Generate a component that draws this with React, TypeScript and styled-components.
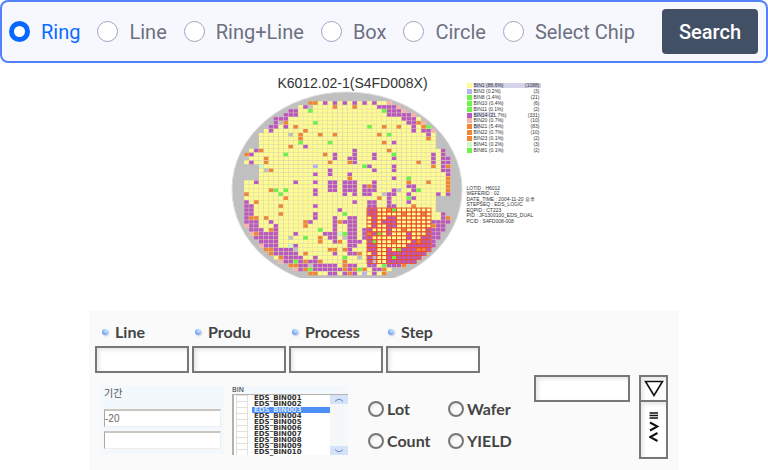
import React, { useState } from "react";
import styled, { createGlobalStyle } from "styled-components";

const GlobalStyle = createGlobalStyle`
  *, *::before, *::after { box-sizing: border-box; }
  body { margin: 0; background: #fff; font-family: Inter, "Liberation Sans", sans-serif; }
  button, input { font: inherit; margin: 0; padding: 0; }
`;

/* ---------- search bar ---------- */

const SearchBar = styled.form`
  display: flex;
  align-items: center;
  gap: 17px;
  height: 63px;
  padding: 0 8px 0 7px;
  border: 2px solid #5580fb;
  border-radius: 8px;
  background: #f7f8fe;
`;

const ModeLabel = styled.label<{ $active: boolean }>`
  display: flex;
  align-items: center;
  gap: 11px;
  font-family: Roboto, sans-serif;
  font-size: 20px;
  line-height: 24px;
  white-space: nowrap;
  color: ${(p) => (p.$active ? "#0b6bff" : "#6c7080")};
`;

const ModeRadio = styled.input`
  appearance: none;
  width: 21px;
  height: 21px;
  border: 1px solid #9da4c2;
  border-radius: 50%;
  background: #fff;
  &:checked { border: 5px solid #0668ff; }
`;

const SearchButton = styled.button`
  width: 96px;
  height: 45px;
  margin-left: auto;
  border: 0;
  border-radius: 4px;
  background: #415065;
  color: #fff;
  font-family: Roboto, sans-serif;
  font-size: 20px;
  font-weight: 500;
`;

/* ---------- wafer ---------- */

const WaferSection = styled.section`
  display: flex;
  justify-content: center;
  gap: 4px;
  padding: 13px 0 0 3px;
`;

const WaferFigure = styled.figure`
  width: 232px;
  margin: 0;
  svg { display: block; }
`;

const WaferTitle = styled.figcaption`
  padding-left: 12px;
  text-align: center;
  white-space: nowrap;
  font-family: "Liberation Sans", sans-serif;
  font-size: 14px;
  line-height: 15px;
  color: #333;
`;

const WaferSide = styled.div`
  width: 74px;
  padding-top: 7px;
  font-family: "Liberation Sans", sans-serif;
  font-size: 5px;
  color: #333;
`;

const Legend = styled.ul`
  display: grid;
  grid-template-rows: repeat(12, 1fr);
  height: 70px;
  margin: 0 0 33px;
  padding: 0;
  list-style: none;
`;

const LegendRow = styled.li<{ $color: string; $share: number }>`
  display: grid;
  grid-template-columns: 5px 1fr auto;
  align-items: center;
  gap: 2px;
  line-height: 5px;
  padding-right: 1px;
  background: linear-gradient(#d3d3ea, #d3d3ea) 7px 0 / ${(p) => p.$share}% 5px no-repeat;
  &::before { content: ""; height: 5px; background: ${(p) => p.$color}; }
`;

const LotInfo = styled.div`
  display: grid;
  height: 38px;
  line-height: 5px;
  white-space: nowrap;
`;

const COLORS: Record<string, string> = {
  Y: "#fffb93", P: "#bb58bf", O: "#f08535", G: "#67f646",
  K: "#f5b3ad", B: "#b4b4f5", L: "#cdf8c8", S: "#c0c0c0",
};

/* Each row: first-last column, then the coloured runs on the yellow field. */
const ROWS = [
  "13-29 O13-14 P16 P18 P20 P22 P24 P26 K29",
  "11-31 P12 S13 O18 O22 P27-30 K31",
  "9-32 P9-10 G13 G28 P29-31 K32",
  "8-34 P8-10 P29-33 K34",
  "6-35 P6-8 P32-34",
  "6-36 P6 S7 O8 G14 P33-34 O35 K36",
  "5-37 P5-6 P8 O10 G25 O28 O31 P34 O36 G37",
  "4-38 P5 O12 P34 P36-37 K38",
  "3-38 S9 O11 O15 O18 O27 G29 P37",
  "3-38 O11 O37",
  "3-38 G11 G17 O28 P30",
  "3-38 O9 P12",
  "1-40 P2 O3 P22 O29 P40",
  "0-40 O0 P1 G8 O16 P18 P22 P26 G30 P38 P40",
  "1-41 O4 P18 P21-22 P26 P30 P38 P40-41",
  "0-41 P1 O4 O17 O21 P22 O35 P38 P40-41",
  "3-41 L3 B14 G24 P25 P30 O38 P40 O41",
  "3-41 S4 O5 P17 P26 P30 P40-41",
  "3-41 P14 P17 P21 P41",
  "3-41 O21 P30 G33 O41",
  "0-41 P2 P10 P14 P17-18 P20-22 P26 O33 O37 O41",
  "0-41 P17-18 P20-22 P24 O25 P26 P33-34 O41",
  "0-41 O5 G6 G8 P14 P17-18 P20-22 P24-26 P30 S31 P34 G35 O41",
  "0-41 O0 G7 P14 P20 P22 P24-25 S28 P29-30 P33 P39 P41",
  "0-38 O8 O27 P29 G33 P34",
  "0-38 P0 O2 P22 P25-26 P29 P33",
  "0-38 P0-1 O7 P14 P25-26 P29-30 O34",
  "0-38 P0-1 P19 P25-26 O29 G30",
  "0-40 P0-1 O7 P14 G20 P25-26 O32 O36 P40",
  "0-41 P0 O1-2 O4 P14 P18 P21-22 P26 P29-30 P40 O41",
  "0-41 P0-2 P5 O12 P13 P18 O19 P20-22 P26 P28-30 P38-41",
  "0-40 K0 P1-2 P6 O12 P18 P21-22 P26 P29-30 O38 P39-40",
  "1-40 P1-3 O5 P6 G15 P18 P21-22 P24-25 P29 O32 P37-40",
  "1-39 K1 O2 P3-6 P10 P16-18 L19 G20 P21-22 P24 O25 P26 G27 P29 P33 P37-39",
  "2-39 P2-6 S9 G12 O15 P17-18 S20 P21-22 P24-25 P33 P36-39",
  "3-38 P3-6 O15 P18 O19 P21-23 P25 G26 O30 P34 O35 P36-38",
  "3-38 K3 P4-6 L9 P10 P21-22 P25-26 P33-38",
  "4-37 O4-5 P6-9 S10 O17-18 O20 P21 P25-26 P29 G31 P32-34 O35-36 P37",
  "5-36 O5 P6-10 O12 P18 P21-22 O23 P26 P29-36",
  "6-35 O7 P8-11 P14 G20 S23 P25 B26 P29 G30 P31-35",
  "7-34 K7 P8-9 G10 P11 O12 P13-14 O15 O20 P25 S26 P29-34",
  "9-32 O9-10 P11-12 S13 P14-18 O20 P21-22 P25-26 G28 P29-31 O32",
  "10-29 K10 P11 O12 G13 P14-18 P19 O20 P21 O22 G23 O24 P26-27 O28",
  "13-28 O13-14 P17-18 P20 O21 P22 B24 P26 O28",
];

type Cell = { row: number; col: number; kind: string };

const CELLS: Cell[] = ROWS.flatMap((text, row) => {
  const [extent, ...runs] = text.split(" ");
  const [first, last] = extent.split("-").map(Number);
  const kinds: string[] = [];
  for (let c = first; c <= last; c++) kinds[c] = "Y";
  runs.forEach((run) => {
    const [a, b = a] = run.slice(1).split("-").map(Number);
    for (let c = a; c <= b; c++) kinds[c] = run[0];
  });
  const cells: Cell[] = [];
  for (let c = first; c <= last; c++) cells.push({ row, col: c, kind: kinds[c] });
  return cells;
});

const CW = 4.92;
const CH = 3.965;
const isSelected = (c: Cell) => c.row >= 27 && c.row <= 40 && c.col >= 25 && c.col <= 37;

function WaferMap() {
  return (
    <svg width="232" height="188" viewBox="0 0 232 188" role="img" aria-label="Wafer bin map">
      <ellipse cx="116" cy="98.3" rx="115" ry="97.3" fill="#c0c0c0" stroke="#dcdcdc" strokeWidth="1" />
      <path d="M60 187.5H172" stroke="#fff" strokeWidth="1" />
      <g transform="translate(13 10)">
        {CELLS.map((c) => (
          <g key={`${c.row}-${c.col}`}>
            <rect x={c.col * CW} y={c.row * CH} width={CW} height={CH} fill="#d8d4ae" shapeRendering="crispEdges" />
            <rect x={c.col * CW + 0.25} y={c.row * CH + 0.25} width={CW - 0.5} height={CH - 0.5} fill={COLORS[c.kind]} />
          </g>
        ))}
        {CELLS.filter(isSelected).map((c) => (
          <rect key={`s${c.row}-${c.col}`} x={c.col * CW} y={c.row * CH} width={CW} height={CH}
            fill="none" stroke="#ea4a28" strokeWidth="0.8" />
        ))}
      </g>
    </svg>
  );
}

const BINS: [string, string, string, string, number][] = [
  ["BIN1", "(86.6%)", "(1088)", "#fffb93", 91],
  ["BIN3", "(0.2%)", "(3)", "#b4b4f5", 0],
  ["BIN8", "(1.4%)", "(21)", "#67f646", 0],
  ["BIN10", "(0.4%)", "(6)", "#67f646", 0],
  ["BIN11", "(0.1%)", "(2)", "#67f646", 0],
  ["BIN14", "(21.7%)", "(331)", "#bb58bf", 28],
  ["BIN20", "(0.7%)", "(10)", "#f5b3ad", 0],
  ["BIN21", "(5.4%)", "(83)", "#f08535", 8],
  ["BIN22", "(0.7%)", "(10)", "#f08535", 0],
  ["BIN23", "(0.1%)", "(2)", "#f08535", 0],
  ["BIN41", "(0.2%)", "(3)", "#cdf8c8", 0],
  ["BIN81", "(0.1%)", "(2)", "#67f646", 0],
];

const LOT_LINES = [
  "LOTID : H6012",
  "WEFERID : 02",
  "DATE_TIME : 2004-11-20 오후",
  "STEPSEQ : EDS_LOGIC",
  "EQPID : CT223",
  "PID : JF1300100_EDS_DUAL",
  "PCID : S4FD008-008",
];

/* ---------- filter panel ---------- */

const Panel = styled.section`
  display: flex;
  justify-content: space-between;
  align-items: flex-end;
  width: 590px;
  max-width: 100%;
  min-height: 159px;
  margin: 32px auto 0;
  padding: 8px 11px 11px 6px;
  background: #fafafa;
  color: #444;
  font-family: Lato, sans-serif;
  font-size: 16px;
  font-weight: 700;
`;

const Filters = styled.div`
  width: 385px;
  padding-bottom: 4px;
`;

const FieldRow = styled.div`
  display: grid;
  grid-template-columns: repeat(4, 1fr);
  gap: 3px;
`;

const FieldLabel = styled.label`
  display: grid;
  gap: 2px;
  line-height: 24px;
`;

const FieldCaption = styled.span<{ $indent: number }>`
  display: flex;
  align-items: center;
  gap: 7px;
  padding-left: ${(p) => p.$indent}px;
  &::before {
    content: "";
    width: 6px;
    height: 6px;
    border-radius: 50%;
    background: radial-gradient(circle at 65% 30%, #d5e6ff, #619bf5 75%);
    box-shadow: 1px 1px 2px #ccc;
  }
`;

const TextBox = styled.input`
  width: 100%;
  height: 27px;
  border: 2px solid #777;
  border-radius: 0;
  background: #fff;
  box-shadow: inset 2px 2px 4px #e4e4e4;
`;

const LowerRow = styled.div`
  display: grid;
  grid-template-columns: 124px 116px 1fr;
  gap: 8px;
  align-items: start;
  margin-top: 13px;
  padding-left: 5px;
`;

const Period = styled.fieldset`
  display: grid;
  gap: 3px;
  min-width: 0;
  height: 68px;
  margin: 0;
  padding: 0 3px 5px 4px;
  border: 0;
  background: #f2f8fc;
  font-family: "Liberation Sans", "Noto Sans CJK KR", sans-serif;
  font-size: 10px;
  font-weight: 400;
  color: #555;
`;

const PeriodCaption = styled.div`
  height: 20px;
  line-height: 15px;
`;

const PeriodInput = styled.input`
  width: 100%;
  height: 18px;
  border: 1px solid #eee;
  border-top: 2px solid #c9c7bd;
  border-left: 1px solid #aaa89e;
  background: #fff;
  color: #666;
`;

const BinPicker = styled.div`
  height: 69px;
  background: #f2f8fc;
  font-family: "DejaVu Sans", sans-serif;
  font-size: 7px;
  font-weight: 700;
  line-height: 6px;
  color: #333;
`;

const BinCaption = styled.div`
  height: 8px;
  padding-top: 1px;
  font-weight: 400;
`;

const BinBody = styled.div`
  display: grid;
  grid-template-columns: 1fr 18px;
  height: 61px;
  border-left: 2px solid #b5b2a8;
  border-top: 1px solid #b5b2a8;
  background: #fff;
`;

const BinOption = styled.label<{ $on: boolean }>`
  display: grid;
  grid-template-columns: 12px 1fr;
  gap: 4px;
  align-items: center;
  height: 6px;
  padding-left: 2px;
  span {
    height: 6px;
    padding-left: 2px;
    background: ${(p) => (p.$on ? "#4d90f5" : "transparent")};
    color: ${(p) => (p.$on ? "#cfe2ff" : "inherit")};
  }
`;

const BinCheck = styled.input`
  appearance: none;
  width: 12px;
  height: 6px;
  border: 1px solid #e2e0d8;
  border-bottom: 0;
  background: #fff;
`;

const ScrollTrack = styled.div`
  display: flex;
  flex-direction: column;
  justify-content: space-between;
  background: #f6f7f9;
`;

const ScrollButton = styled.button`
  display: grid;
  place-items: center;
  height: 9px;
  border: 0;
  background: #d5e2fb;
`;

const UnitGrid = styled.div`
  display: grid;
  grid-template-columns: 80px 1fr;
  row-gap: 8px;
  padding: 11px 0 0 12px;
`;

const UnitLabel = styled.label`
  display: flex;
  align-items: center;
  gap: 3px;
  line-height: 24px;
`;

const UnitRadio = styled.input`
  appearance: none;
  flex: none;
  width: 16px;
  height: 16px;
  border: 2px solid #777;
  border-radius: 50%;
  background: #fafafa;
  box-shadow: inset 1px 1px 2px #ddd;
  &:checked { background: #777; }
`;

const Actions = styled.div`
  display: grid;
  grid-template-columns: 96px 29px;
  gap: 9px;
  align-items: start;
`;

const ActionStack = styled.div`
  display: grid;
  grid-template-rows: 27px 57px;
`;

const StackButton = styled.button`
  display: grid;
  place-items: center;
  border: 2px solid #777;
  background: #fff;
  box-shadow: inset 2px 2px 4px #e4e4e4;
  & + & { border-top: 0; padding-bottom: 6px; }
`;

const MODES = ["Ring", "Line", "Ring+Line", "Box", "Circle", "Select Chip"];
const FIELDS: [string, number][] = [["Line", 7], ["Produ", 3], ["Process", 3], ["Step", 2]];
const BIN_NAMES = Array.from({ length: 10 }, (_, i) => `EDS_BIN${String(i + 1).padStart(3, "0")}`);
const UNITS = ["Lot", "Wafer", "Count", "YIELD"];

export default function App() {
  const [mode, setMode] = useState("Ring");
  return (
    <>
      <GlobalStyle />
      <SearchBar onSubmit={(e) => e.preventDefault()}>
        {MODES.map((m) => (
          <ModeLabel key={m} $active={m === mode}>
            <ModeRadio type="radio" name="mode" checked={m === mode} onChange={() => setMode(m)} />
            {m}
          </ModeLabel>
        ))}
        <SearchButton type="submit">Search</SearchButton>
      </SearchBar>

      <WaferSection>
        <WaferFigure>
          <WaferTitle>K6012.02-1(S4FD008X)</WaferTitle>
          <WaferMap />
        </WaferFigure>
        <WaferSide>
          <Legend>
            {BINS.map(([name, pct, count, color, share]) => (
              <LegendRow key={name} $color={color} $share={share}>
                <span>{name} {pct}</span>
                <span>{count}</span>
              </LegendRow>
            ))}
          </Legend>
          <LotInfo>
            {LOT_LINES.map((line) => <span key={line}>{line}</span>)}
          </LotInfo>
        </WaferSide>
      </WaferSection>

      <Panel>
        <Filters>
          <FieldRow>
            {FIELDS.map(([name, indent]) => (
              <FieldLabel key={name}>
                <FieldCaption $indent={indent}>{name}</FieldCaption>
                <TextBox type="text" />
              </FieldLabel>
            ))}
          </FieldRow>
          <LowerRow>
            <Period>
              <PeriodCaption>기간</PeriodCaption>
              <PeriodInput type="text" aria-label="기간 from" defaultValue="-20" />
              <PeriodInput type="text" aria-label="기간 to" />
            </Period>
            <BinPicker>
              <BinCaption>BIN</BinCaption>
              <BinBody>
                <div>
                  {BIN_NAMES.map((b, i) => (
                    <BinOption key={b} $on={i === 2}>
                      <BinCheck type="checkbox" />
                      <span>{b}</span>
                    </BinOption>
                  ))}
                </div>
                <ScrollTrack>
                  <ScrollButton type="button" aria-label="Scroll up">
                    <svg width="10" height="4" viewBox="0 0 10 4"><path d="M1 3.5Q5-1 9 3.5" fill="none" stroke="#6d86b4" /></svg>
                  </ScrollButton>
                  <ScrollButton type="button" aria-label="Scroll down">
                    <svg width="10" height="4" viewBox="0 0 10 4"><path d="M1 .5Q5 5 9 .5" fill="none" stroke="#6d86b4" /></svg>
                  </ScrollButton>
                </ScrollTrack>
              </BinBody>
            </BinPicker>
            <UnitGrid>
              {UNITS.map((u) => (
                <UnitLabel key={u}>
                  <UnitRadio type="radio" name="unit" />
                  {u}
                </UnitLabel>
              ))}
            </UnitGrid>
          </LowerRow>
        </Filters>
        <Actions>
          <TextBox type="text" aria-label="Value" />
          <ActionStack>
            <StackButton type="button" aria-label="Open">
              <svg width="20" height="17" viewBox="0 0 20 17"><path d="M1.5 1.5H18.5L10 15.5Z" fill="none" stroke="#111" strokeWidth="1.6" /></svg>
            </StackButton>
            <StackButton type="button" aria-label="Compare">
              <svg width="10" height="32" viewBox="0 0 10 32" fill="none" stroke="#111">
                <path d="M.5 2H9M.5 4.5H9M.5 7H9" strokeWidth="1.3" />
                <path d="M1 11.5L8.5 15.5L1 19.5M8.5 22L1 26L8.5 30" strokeWidth="2" />
              </svg>
            </StackButton>
          </ActionStack>
        </Actions>
      </Panel>
    </>
  );
}
